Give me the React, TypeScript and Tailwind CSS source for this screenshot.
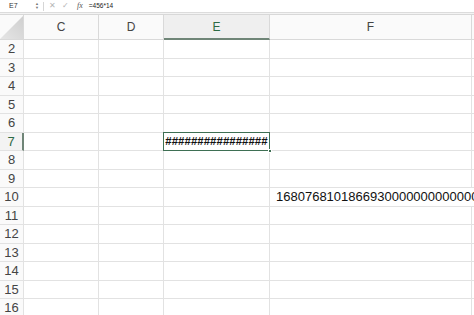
import React from "react";

const rows = [2, 3, 4, 5, 6, 7, 8, 9, 10, 11, 12, 13, 14, 15, 16];
const cols = ["C", "D", "E", "F"];

function Cell({ row, col }: { row: number; col: string }) {
  if (row === 7 && col === "E") {
    return (
      <div className="relative border-r border-b border-[#e2e2e2] h-[18.5px]">
        <div className="absolute inset-[-1px] border-[1.5px] border-[#3e6f53] flex items-center justify-center overflow-hidden">
          <span className="text-[11.5px] font-bold text-[#111] leading-none">
            ################
          </span>
        </div>
        <div className="absolute right-[-3px] bottom-[-3px] w-[4px] h-[4px] bg-[#3e6f53] border border-white" />
      </div>
    );
  }
  return <div className="border-r border-b border-[#e2e2e2] h-[18.5px]" />;
}

export default function App() {
  return (
    <div
      className="w-[474px] h-[315px] overflow-hidden bg-white"
      style={{ fontFamily: '"Liberation Sans", Arial, sans-serif' }}
    >
      {/* formula bar */}
      <div className="h-[13px] flex items-center border-b border-[#dcdcdc] text-[7px] text-[#333]">
        <div className="w-[33px] pl-[9px] flex items-center">E7</div>
        <div className="w-[8px] flex flex-col items-center text-[#777] leading-none text-[4px]">
          <span>▲</span>
          <span>▼</span>
        </div>
        <div className="w-px h-[9px] bg-[#d6d6d6] ml-[2px]" />
        <div className="flex items-center gap-[6px] ml-[5px] text-[#b5b5b5] text-[8px]">
          <span>✕</span>
          <span>✓</span>
        </div>
        <span
          className="ml-[8px] italic text-[#555] text-[8px]"
          style={{ fontFamily: '"Liberation Serif", serif' }}
        >
          fx
        </span>
        <span className="ml-[6px] text-[6.5px] text-[#222]">=456*14</span>
      </div>
      <div className="h-[2px] bg-[#f3f3f3] border-b border-[#d8d8d8]" />

      {/* grid */}
      <div className="grid grid-cols-[24px_75px_65px_106px_202px_1fr]">
        {/* header row */}
        <div className="relative h-[25px] bg-[#fafafa] border-r border-b border-[#d9d9d9] overflow-hidden">
          <svg className="absolute inset-0" width="24" height="25" viewBox="0 0 24 25">
            <defs>
              <linearGradient id="tri" x1="0" y1="1" x2="1" y2="0">
                <stop offset="0" stopColor="#e6e6e6" />
                <stop offset="1" stopColor="#cfcfcf" />
              </linearGradient>
            </defs>
            <polygon points="23,1 23,24 0,24" fill="url(#tri)" />
          </svg>
        </div>
        {cols.map((c) => (
          <div
            key={c}
            className={
              c === "E"
                ? "h-[25px] bg-[#efefef] border-r border-[#d9d9d9] border-b-2 border-b-[#6f8577] flex items-center justify-center text-[12px] text-[#2d6b45]"
                : "h-[25px] bg-[#fafafa] border-r border-b border-[#d9d9d9] flex items-center justify-center text-[12px] text-[#444]"
            }
          >
            {c}
          </div>
        ))}
        <div className="h-[25px] bg-[#fafafa] border-b border-[#d9d9d9]" />

        {rows.map((r) => (
          <React.Fragment key={r}>
            <div
              className={
                r === 7
                  ? "h-[18.5px] bg-[#f3f3f3] border-r-2 border-r-[#6f8577] border-b border-b-[#e2e2e2] flex items-center justify-center text-[13px] text-[#2d6b45]"
                  : "h-[18.5px] bg-[#fafafa] border-r border-b border-[#e2e2e2] flex items-center justify-center text-[13px] text-[#444]"
              }
            >
              {r}
            </div>
            <Cell row={r} col="C" />
            <Cell row={r} col="D" />
            <Cell row={r} col="E" />
            {r === 10 ? (
              <div className="col-span-2 h-[18.5px] border-b border-[#e2e2e2] flex items-center pl-[6px] overflow-hidden whitespace-nowrap text-[13px] text-[#111]">
                1680768101866930000000000000000000
              </div>
            ) : (
              <>
                <Cell row={r} col="F" />
                <div className="border-b border-[#e2e2e2] h-[18.5px]" />
              </>
            )}
          </React.Fragment>
        ))}
      </div>
    </div>
  );
}
